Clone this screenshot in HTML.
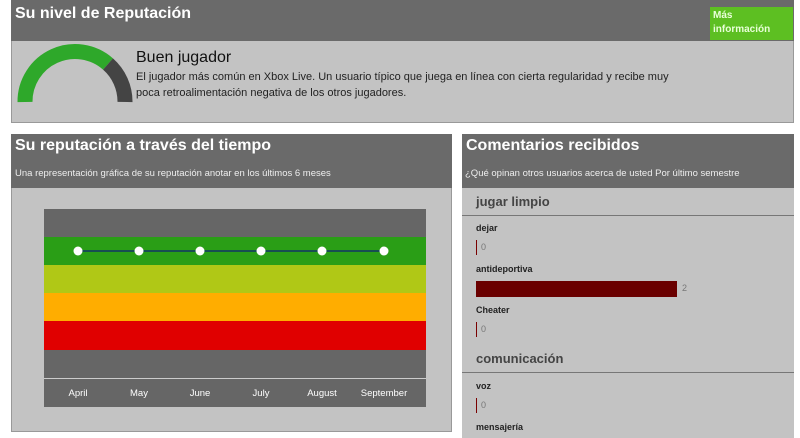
<!DOCTYPE html>
<html><head><meta charset="utf-8"><style>
*{margin:0;padding:0;box-sizing:border-box}
body{width:800px;height:438px;background:#fff;font-family:"Liberation Sans",sans-serif;position:relative;overflow:hidden}
.a{position:absolute}
.hd{background:#6a6a6a;color:#fff}
.bd{background:#c3c3c3}
.lbl{position:absolute;font-size:9px;font-weight:bold;color:#222}
.z{position:absolute;font-size:9px;color:#777;border-left:1px solid #7a0000;padding-left:4px;height:15px;line-height:15px}
</style></head><body>
<div class="a hd" style="left:11px;top:0;width:783px;height:41px"></div>
<div class="a" style="left:15px;top:5px;color:#fff;font-size:16px;font-weight:bold">Su nivel de Reputación</div>
<div class="a" style="left:710px;top:7px;width:83px;height:33px;background:#5dbf22;color:#e8ffd8;font-size:10px;font-weight:bold;padding:2px 3px;line-height:14px">Más<br>información</div>
<div class="a bd" style="left:11px;top:41px;width:783px;height:82px;border:1px solid #999;border-top:none"></div>
<svg class="a" style="left:15px;top:42px" width="120" height="65">
<path d="M10 60 A50 50 0 0 1 93 22" fill="none" stroke="#2ea82a" stroke-width="15"/>
<path d="M93 22 A50 50 0 0 1 110 60" fill="none" stroke="#444" stroke-width="15"/>
</svg>
<div class="a" style="left:136px;top:49px;font-size:16px;color:#111">Buen jugador</div>
<div class="a" style="left:136px;top:69px;font-size:11px;color:#222;line-height:16px;white-space:nowrap">El jugador más común en Xbox Live. Un usuario típico que juega en línea con cierta regularidad y recibe muy<br>poca retroalimentación negativa de los otros jugadores.</div>

<div class="a hd" style="left:11px;top:134px;width:441px;height:54px"></div>
<div class="a" style="left:15px;top:137px;color:#fff;font-size:16px;font-weight:bold">Su reputación a través del tiempo</div>
<div class="a" style="left:15px;top:168px;color:#eee;font-size:9.5px">Una representación gráfica de su reputación anotar en los últimos 6 meses</div>
<div class="a bd" style="left:11px;top:188px;width:441px;height:244px;border:1px solid #999;border-top:none"></div>
<div class="a" style="left:44px;top:209px;width:382px;height:198px;background:#666"></div>
<div class="a" style="left:44px;top:237px;width:382px;height:28px;background:#2a9e16"></div>
<div class="a" style="left:44px;top:265px;width:382px;height:28px;background:#b0c816"></div>
<div class="a" style="left:44px;top:293px;width:382px;height:28px;background:#ffad00"></div>
<div class="a" style="left:44px;top:321px;width:382px;height:29px;background:#e00000"></div>
<div class="a" style="left:44px;top:378px;width:382px;height:1px;background:#ccc"></div>
<svg class="a" style="left:44px;top:237px" width="382" height="28">
<line x1="34" y1="14" x2="340" y2="14" stroke="#136" stroke-width="1.5"/>
<g fill="#fff"><circle cx="34" cy="14" r="4.5"/><circle cx="95" cy="14" r="4.5"/><circle cx="156" cy="14" r="4.5"/><circle cx="217" cy="14" r="4.5"/><circle cx="278" cy="14" r="4.5"/><circle cx="340" cy="14" r="4.5"/></g>
</svg>
<div class="a" style="left:44px;top:388px;width:382px;color:#fff;font-size:9.5px">
<span class="a" style="left:34px;transform:translateX(-50%)">April</span>
<span class="a" style="left:95px;transform:translateX(-50%)">May</span>
<span class="a" style="left:156px;transform:translateX(-50%)">June</span>
<span class="a" style="left:217px;transform:translateX(-50%)">July</span>
<span class="a" style="left:278px;transform:translateX(-50%)">August</span>
<span class="a" style="left:340px;transform:translateX(-50%);white-space:nowrap">September</span>
</div>

<div class="a hd" style="left:462px;top:134px;width:332px;height:54px"></div>
<div class="a" style="left:466px;top:137px;color:#fff;font-size:16px;font-weight:bold">Comentarios recibidos</div>
<div class="a" style="left:465px;top:168px;color:#eee;font-size:9.5px">¿Qué opinan otros usuarios acerca de usted Por último semestre</div>
<div class="a bd" style="left:462px;top:188px;width:332px;height:250px"></div>
<div class="a" style="left:476px;top:194px;font-size:13px;font-weight:bold;color:#444">jugar limpio</div>
<div class="a" style="left:462px;top:215px;width:332px;height:1px;background:#777"></div>
<div class="lbl" style="left:476px;top:223px">dejar</div>
<div class="z" style="left:476px;top:240px">0</div>
<div class="lbl" style="left:476px;top:264px">antideportiva</div>
<div class="a" style="left:476px;top:281px;width:201px;height:16px;background:#6a0000"></div>
<div class="a" style="left:682px;top:283px;font-size:9px;color:#777">2</div>
<div class="lbl" style="left:476px;top:305px">Cheater</div>
<div class="z" style="left:476px;top:322px">0</div>
<div class="a" style="left:476px;top:351px;font-size:13px;font-weight:bold;color:#444">comunicación</div>
<div class="a" style="left:462px;top:372px;width:332px;height:1px;background:#777"></div>
<div class="lbl" style="left:476px;top:381px">voz</div>
<div class="z" style="left:476px;top:398px">0</div>
<div class="lbl" style="left:476px;top:422px">mensajería</div>
</body></html>
